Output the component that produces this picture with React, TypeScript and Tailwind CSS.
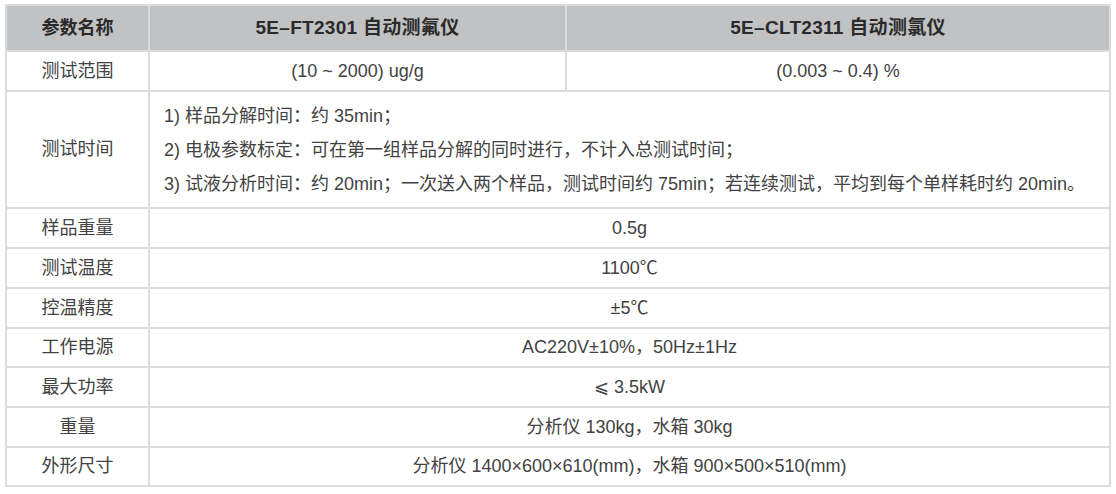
import React from "react";

const cell = "border-r-2 border-b-2 border-[#dcdcdc] flex items-center justify-center";

const rows: { label: string; value: string; h: string }[] = [
  { label: "样品重量", value: "0.5g", h: "h-[40px]" },
  { label: "测试温度", value: "1100℃", h: "h-[40px]" },
  { label: "控温精度", value: "±5℃", h: "h-[40px]" },
  { label: "工作电源", value: "AC220V±10%，50Hz±1Hz", h: "h-[39px]" },
  { label: "最大功率", value: "⩽ 3.5kW", h: "h-[40px]" },
  { label: "重量", value: "分析仪 130kg，水箱 30kg", h: "h-[40px]" },
  { label: "外形尺寸", value: "分析仪 1400×600×610(mm)，水箱 900×500×510(mm)", h: "h-[39px]" },
];

export default function App() {
  return (
    <div className="w-[1116px] h-[494px] bg-white pt-[4px] pl-[5px] font-['Liberation_Sans','Noto_Sans_CJK_SC','DejaVu_Sans',sans-serif] text-[18px] text-[#424242]">
      <div className="w-[1106px] border-l-2 border-t-2 border-[#dcdcdc]">
        <div className="grid grid-cols-[143px_417px_544px] h-[46px] bg-[#c1c2c4] font-bold text-[#2a2a2a]">
          <div className={cell}>参数名称</div>
          <div className={`${cell} text-[19px] tracking-[0.3px]`}>5E–FT2301 自动测氟仪</div>
          <div className={`${cell} text-[19px] tracking-[0.3px]`}>5E–CLT2311 自动测氯仪</div>
        </div>
        <div className="grid grid-cols-[143px_417px_544px] h-[40px]">
          <div className={cell}>测试范围</div>
          <div className={cell}>(10 ~ 2000) ug/g</div>
          <div className={cell}>(0.003 ~ 0.4) %</div>
        </div>
        <div className="grid grid-cols-[143px_961px] h-[117px]">
          <div className={cell}>测试时间</div>
          <div className="border-r-2 border-b-2 border-[#dcdcdc] flex flex-col justify-center pl-[14px] leading-[34px]">
            <div>1) 样品分解时间：约 35min；</div>
            <div>2) 电极参数标定：可在第一组样品分解的同时进行，不计入总测试时间；</div>
            <div>3) 试液分析时间：约 20min；一次送入两个样品，测试时间约 75min；若连续测试，平均到每个单样耗时约 20min。</div>
          </div>
        </div>
        {rows.map((r) => (
          <div key={r.label} className={`grid grid-cols-[143px_961px] ${r.h}`}>
            <div className={cell}>{r.label}</div>
            <div className={cell}>{r.value}</div>
          </div>
        ))}
      </div>
    </div>
  );
}
